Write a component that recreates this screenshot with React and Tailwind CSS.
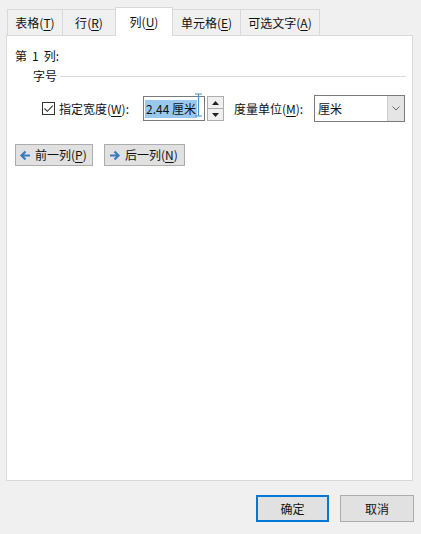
import React from "react";

const font = { fontFamily: '"Microsoft YaHei UI", "Noto Sans CJK SC", "Noto Sans", sans-serif' };

function Key({ children }) {
  return <span className="underline underline-offset-2">{children}</span>;
}

function Tab({ label, k, active, width }) {
  if (active) {
    return (
      <div
        className={`relative z-10 -mb-px flex h-[29px] items-center justify-center border border-b-0 border-[#d9d9d9] bg-white ${width}`}
      >
        {label}(<Key>{k}</Key>)
      </div>
    );
  }
  return (
    <div
      className={`-mr-px flex h-[26px] items-center justify-center border border-b-0 border-[#d9d9d9] bg-[#f0f0f0] ${width}`}
    >
      {label}(<Key>{k}</Key>)
    </div>
  );
}

function Arrow({ dir }) {
  return (
    <svg width="12" height="11" viewBox="0 0 12 11" className="shrink-0">
      {dir === "left" ? (
        <path d="M11 5.5H2.5M6.5 1.5L2.5 5.5l4 4" stroke="#3a7bbf" strokeWidth="2.2" fill="none" />
      ) : (
        <path d="M1 5.5h8.5M5.5 1.5l4 4-4 4" stroke="#3a7bbf" strokeWidth="2.2" fill="none" />
      )}
    </svg>
  );
}

export default function App() {
  return (
    <div className="h-[534px] w-[421px] bg-[#f0f0f0] text-[12px] leading-[16px] text-[#111]" style={font}>
      {/* tabs */}
      <div className="flex items-end pl-[7px] pt-[7px]">
        <Tab label="表格" k="T" width="w-[56px]" />
        <Tab label="行" k="R" width="w-[54px]" />
        <Tab label="列" k="U" active width="w-[58px] -mr-px" />
        <Tab label="单元格" k="E" width="w-[69px]" />
        <Tab label="可选文字" k="A" width="w-[80px]" />
      </div>

      {/* panel */}
      <div className="ml-[6px] h-[446px] w-[407px] border border-[#d9d9d9] bg-white pl-[8px]">
        <div className="mt-[12px]">
          第<span className="mx-[5px]">1</span>列:
        </div>

        <div className="mt-[4px] flex items-center">
          <span className="ml-[18px]">字号</span>
          <div className="ml-[3px] mr-[6px] h-px flex-1 bg-[#dcdcdc]" />
        </div>

        <div className="mt-[11px] flex h-[27px] items-center">
          <div className="ml-[27px] flex h-[13px] w-[13px] items-center justify-center border border-[#333]">
            <svg width="11" height="11" viewBox="0 0 11 11">
              <path d="M1.5 5.5l2.8 2.8L9.8 2.6" stroke="#333" strokeWidth="1.1" fill="none" />
            </svg>
          </div>
          <span className="ml-[4px] w-[84px]">
            指定宽度(<Key>W</Key>):
          </span>
          <div className="relative flex h-[25px] w-[62px] items-center border border-[#7a7a7a] bg-white pl-[1px]">
            <span className="bg-[#99c9ef] px-[1px] leading-[18px]">2.44 厘米</span>
            {/* I-beam cursor */}
            <svg width="9" height="24" viewBox="0 0 9 24" className="absolute left-[50px] top-[-4px]">
              <path d="M1 1h7M1 23h7M4.5 1v22" stroke="#4a90c8" strokeWidth="1.2" fill="none" />
            </svg>
          </div>
          <div className="ml-[2px] flex h-[25px] w-[17px] flex-col border border-[#adadad] bg-white">
            <div className="flex flex-1 items-center justify-center border-b border-[#adadad] bg-[#f0f0f0]">
              <svg width="7" height="4" viewBox="0 0 7 4">
                <path d="M0 4L3.5 0 7 4z" fill="#222" />
              </svg>
            </div>
            <div className="flex flex-1 items-center justify-center bg-[#f0f0f0]">
              <svg width="7" height="4" viewBox="0 0 7 4">
                <path d="M0 0h7L3.5 4z" fill="#222" />
              </svg>
            </div>
          </div>
          <span className="ml-[10px] w-[80px]">
            度量单位(<Key>M</Key>):
          </span>
          <div className="flex h-[27px] w-[91px] items-stretch border border-[#7a7a7a] bg-white">
            <span className="flex flex-1 items-center pl-[3px]">厘米</span>
            <div className="flex w-[17px] items-center justify-center border-l border-[#cccccc] bg-[#e5e5e5]">
              <svg width="8" height="5" viewBox="0 0 8 5">
                <path d="M0.5 0.5L4 4 7.5 0.5" stroke="#666" strokeWidth="1" fill="none" />
              </svg>
            </div>
          </div>
        </div>

        <div className="mt-[22px] flex gap-[11px]">
          <button className="flex h-[22px] w-[78px] items-center gap-[4px] border border-[#adadad] bg-[#e1e1e1] pl-[3px]">
            <Arrow dir="left" />
            <span>
              前一列(<Key>P</Key>)
            </span>
          </button>
          <button className="flex h-[22px] w-[81px] items-center gap-[4px] border border-[#adadad] bg-[#e1e1e1] pl-[4px]">
            <Arrow dir="right" />
            <span>
              后一列(<Key>N</Key>)
            </span>
          </button>
        </div>
      </div>

      {/* footer */}
      <div className="mt-[14px] flex justify-end gap-[11px] pr-[7px]">
        <button className="h-[27px] w-[73px] border-2 border-[#0078d7] bg-[#e1e1e1]">确定</button>
        <button className="h-[27px] w-[74px] border border-[#adadad] bg-[#e1e1e1]">取消</button>
      </div>
    </div>
  );
}
